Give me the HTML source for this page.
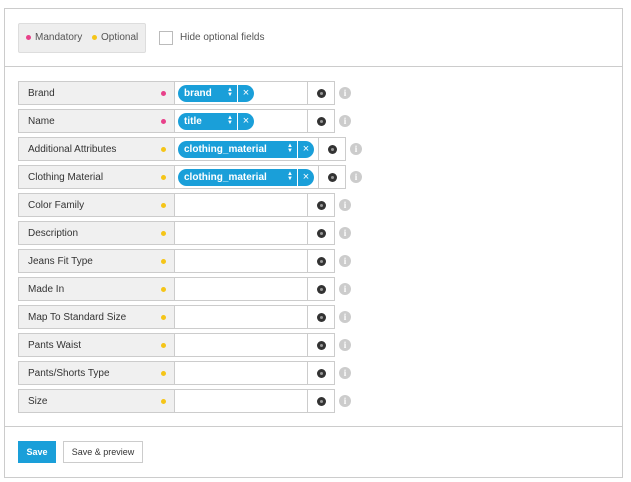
<!DOCTYPE html>
<html><head><style>
body{margin:0;width:631px;height:482px;background:#fff;font-family:"Liberation Sans",sans-serif;font-size:10px;color:#333;position:relative;overflow:hidden}
.a{position:absolute;box-sizing:border-box}
.lab{border:1px solid #ccc;background:#f0f0f0;height:24px;width:157px;left:18px;padding:6px 9px}
.dot{width:5px;height:5px;border-radius:50%;top:9px;left:142px}
.inp{border:1px solid #ccc;background:#fff;height:24px}
.btn{border:1px solid #ccc;background:#fff;height:24px;width:28px}
.btn i{position:absolute;left:9px;top:7px;width:9px;height:9px;border-radius:50%;background:#333}
.btn i:after{content:"";position:absolute;left:3px;top:3px;width:3px;height:3px;border-radius:50%;background:#999}
.info{width:12px;height:12px;border-radius:50%;background:#ccc;color:#fff;font-size:9px;font-weight:bold;text-align:center;line-height:12px;font-family:"Liberation Serif",serif}
.tag{height:17px;top:3px;left:3px;background:#1a9fd9;border-radius:9px;color:#fff;font-weight:bold;padding:0 6px;line-height:17px}
.tag .s{position:absolute;top:0;height:17px;border-left:1px solid #fff;width:16px;text-align:center;line-height:17px;font-size:11px;font-weight:normal}
.tag .ud{position:absolute;top:3px;font-size:6px;line-height:5px}
</style></head><body>
<div class="a" style="left:4px;top:8px;width:619px;height:470px;border:1px solid #ccc"></div>
<div class="a" style="left:5px;top:66px;width:617px;height:1px;background:#ccc"></div>
<div class="a" style="left:5px;top:426px;width:617px;height:1px;background:#ccc"></div>
<div class="a" style="left:18px;top:23px;width:128px;height:30px;border:1px solid #ddd;background:#eee;border-radius:2px"></div>
<div class="a" style="left:26px;top:35px;width:5px;height:5px;border-radius:50%;background:#e8418a"></div>
<div class="a" style="left:35px;top:32px;color:#555">Mandatory</div>
<div class="a" style="left:92px;top:35px;width:5px;height:5px;border-radius:50%;background:#f5c518"></div>
<div class="a" style="left:101px;top:32px;color:#555">Optional</div>
<div class="a" style="left:159px;top:31px;width:14px;height:14px;border:1px solid #bbb;background:#fff"></div>
<div class="a" style="left:180px;top:32px;color:#555">Hide optional fields</div>
<div id="rows"></div>
<div class="a" style="left:18px;top:441px;width:38px;height:22px;background:#1a9fd9;color:#fff;font-weight:bold;text-align:center;line-height:22px;font-size:9px">Save</div>
<div class="a" style="left:63px;top:441px;width:80px;height:22px;border:1px solid #ccc;text-align:center;line-height:20px;font-size:9px">Save &amp; preview</div>
<script>
var rows=[["Brand",1,"brand",76],["Name",1,"title",76],["Additional Attributes",0,"clothing_material",136],["Clothing Material",0,"clothing_material",136],["Color Family",0],["Description",0],["Jeans Fit Type",0],["Made In",0],["Map To Standard Size",0],["Pants Waist",0],["Pants/Shorts Type",0],["Size",0]];
var h="";rows.forEach(function(r,i){var y=81+i*28;var w=r[3]==136?145:134;
h+='<div class="a lab" style="top:'+y+'px">'+r[0]+'<div class="a dot" style="background:'+(r[1]?'#e8418a':'#f5c518')+'"></div></div>';
h+='<div class="a inp" style="left:174px;top:'+y+'px;width:'+w+'px">';
if(r[2]){var tw=r[3];h+='<div class="a tag" style="width:'+tw+'px">'+r[2]+'<div class="a ud" style="left:'+(tw-27)+'px">▲<br>▼</div><div class="s" style="left:'+(tw-17)+'px">×</div></div>';}
h+='</div><div class="a btn" style="left:'+(174+w-1)+'px;top:'+y+'px"><i></i></div>';
h+='<div class="a info" style="left:'+(174+w+31)+'px;top:'+(y+6)+'px">i</div>';});
document.getElementById("rows").innerHTML=h;
</script>
</body></html>
